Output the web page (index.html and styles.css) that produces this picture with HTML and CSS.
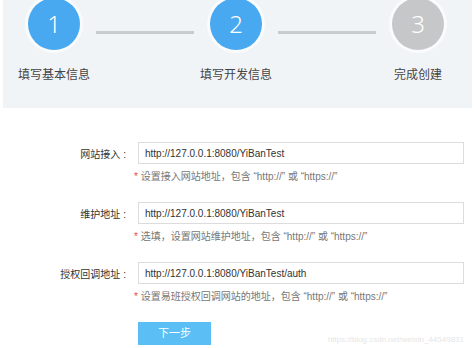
FILE: index.html
```html
<!DOCTYPE html>
<html>
<head>
    <title>创建应用</title>
    <link rel="stylesheet" href="styles.css">
</head>
<body>
    <!-- 步骤条 -->
    <div class="steps">
        <div class="step">
            <div class="circle active">1</div>
            <div class="step-name">填写基本信息</div>
        </div>
        <div class="line"></div>
        <div class="step">
            <div class="circle active">2</div>
            <div class="step-name">填写开发信息</div>
        </div>
        <div class="line"></div>
        <div class="step">
            <div class="circle">3</div>
            <div class="step-name">完成创建</div>
        </div>
    </div>

    <!-- 表单 -->
    <div class="form">
        <div class="field">
            <label>网站接入<span>:</span></label>
            <input type="text" value="http://127.0.0.1:8080/YiBanTest">
        </div>
        <div class="hint"><span>*</span> 设置接入网站地址，包含 “http://” 或 “https://”</div>

        <div class="field">
            <label>维护地址<span>:</span></label>
            <input type="text" value="http://127.0.0.1:8080/YiBanTest">
        </div>
        <div class="hint"><span>*</span> 选填，设置网站维护地址，包含 “http://” 或 “https://”</div>

        <div class="field">
            <label>授权回调地址<span>:</span></label>
            <input type="text" value="http://127.0.0.1:8080/YiBanTest/auth">
        </div>
        <div class="hint"><span>*</span> 设置易班授权回调网站的地址，包含 “http://” 或 “https://”</div>

        <div class="actions">
            <a href="#" class="next">下一步</a>
            <span class="watermark">https://blog.csdn.net/weixin_44549831</span>
        </div>
    </div>
</body>
</html>
```

FILE: styles.css
```css
body {
    margin: 0;
    padding: 0;
    background-color: #fff;
    font-family: "Liberation Sans", "Noto Sans CJK SC", sans-serif;
    color: #333;
    overflow: hidden;
}

/* 步骤条 */
.steps {
    display: flex;
    margin-left: 3px;
    width: 469px;
    height: 108px;
    background-color: #f1f4f7;
    overflow: hidden;
}

.step {
    width: 102px;
    display: flex;
    flex-direction: column;
    align-items: center;
    margin-top: -2px;
}

.circle {
    width: 52px;
    height: 52px;
    border-radius: 50%;
    background-color: #c6c7c9;
    color: #fff;
    font-family: "Noto Sans", sans-serif;
    font-weight: 300;
    font-size: 24px;
    line-height: 52px;
    text-align: center;
    box-shadow: 0 0 0 3px rgba(255, 255, 255, 0.6);
}

.circle.active {
    background-color: #48a8f0;
}

.step-name {
    margin-top: 15px;
    font-family: "Noto Sans CJK SC", sans-serif;
    font-size: 12px;
    color: #444;
}

.line {
    width: 98px;
    height: 3px;
    margin: 31px -9px 0 -9px;
    background-color: #c8ccd0;
}

/* 表单 */
.form {
    padding-top: 34px;
}

.field {
    display: flex;
    align-items: center;
}

.field label {
    width: 126px;
    text-align: right;
    font-size: 10px;
    color: #333;
    margin-right: 12px;
}

.field label span {
    margin-left: 3px;
}

.field input {
    width: 312px;
    height: 20px;
    padding: 0 6px;
    border: 1px solid #dcdcdc;
    font-family: "Liberation Sans", sans-serif;
    font-size: 10px;
    color: #333;
    outline: none;
}

.hint {
    margin: 6px 0 18px 134px;
    font-size: 10px;
    line-height: 14px;
    color: #777;
}

.hint span {
    color: #e84c3d;
}

.actions {
    display: flex;
    align-items: flex-end;
    justify-content: space-between;
    margin-left: 138px;
    margin-right: 10px;
    margin-top: 0;
}

.next {
    width: 73px;
    height: 23px;
    line-height: 23px;
    text-align: center;
    background-color: #5bbff5;
    color: #fff;
    font-size: 11px;
    text-decoration: none;
}

.watermark {
    font-size: 8px;
    color: #e6e6e6;
    margin-bottom: 1px;
}
```
